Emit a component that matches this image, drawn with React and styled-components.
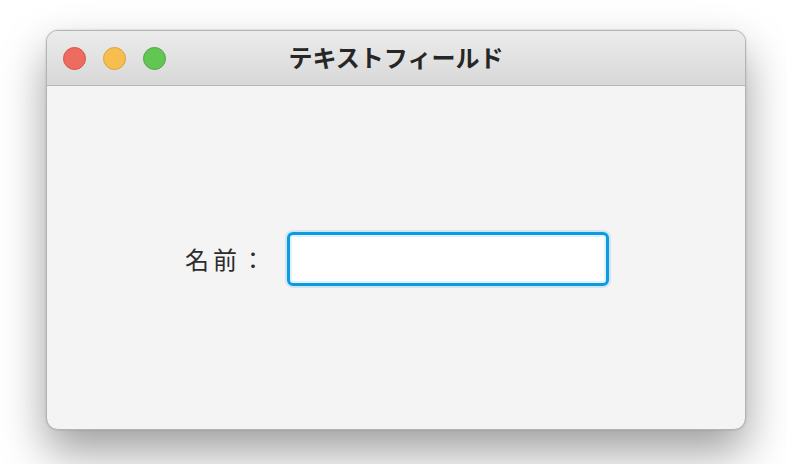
import React from 'react';
import styled, { createGlobalStyle } from 'styled-components';

const GlobalStyle = createGlobalStyle`
  html, body {
    margin: 0;
    background: #ffffff;
    font-family: "Noto Sans CJK JP", "Noto Sans", sans-serif;
  }
`;

const Page = styled.div`
  width: 787px;
  height: 464px;
  box-sizing: border-box;
  padding: 30px 41px 34px 46px;
  overflow: hidden;
`;

const Window = styled.div`
  width: 700px;
  height: 400px;
  box-sizing: border-box;
  display: flex;
  flex-direction: column;
  border-radius: 12px;
  border: 1px solid #b4b4b4;
  background: #f4f4f4;
  overflow: hidden;
  box-shadow: 0 22px 45px rgba(0, 0, 0, 0.38), 0 0 2px rgba(0, 0, 0, 0.2);
`;

const TitleBar = styled.div`
  position: relative;
  height: 55px;
  flex: none;
  display: flex;
  align-items: center;
  justify-content: center;
  background: linear-gradient(#ececec, #d8d8d8);
  border-bottom: 1px solid #b6b6b6;
  box-sizing: border-box;
`;

const Lights = styled.div`
  position: absolute;
  left: 16px;
  top: 16px;
  display: flex;
  gap: 17px;
`;

const Light = styled.span`
  width: 23px;
  height: 23px;
  border-radius: 50%;
  box-sizing: border-box;
  background: ${p => p.$fill};
  border: 1px solid ${p => p.$edge};
`;

const Title = styled.div`
  font-size: 24px;
  font-weight: 700;
  color: #262626;
  margin: 0 0 3px 0;
`;

const Content = styled.div`
  flex: 1;
  display: flex;
  align-items: center;
  justify-content: center;
  gap: 18px;
  padding: 2px 0 0 2px;
`;

const Label = styled.label`
  font-size: 24px;
  color: #2c2c2c;
  letter-spacing: 4px;
  margin-top: -1px;
`;

const Field = styled.input`
  width: 322px;
  height: 54px;
  box-sizing: border-box;
  border: 3px solid #0a9be0;
  border-radius: 6px;
  background: #ffffff;
  outline: none;
  font-size: 20px;
  padding: 0 10px;
  box-shadow: 0 0 0 2px rgba(10, 155, 224, 0.15), inset 0 0 0 2px #e2f1f9;
`;

export default function App() {
  return (
    <>
      <GlobalStyle />
      <Page>
        <Window>
          <TitleBar>
            <Lights>
              <Light $fill="#ee6b60" $edge="#d4544a" />
              <Light $fill="#f6be4f" $edge="#dca23a" />
              <Light $fill="#62c554" $edge="#4ea940" />
            </Lights>
            <Title>テキストフィールド</Title>
          </TitleBar>
          <Content>
            <Label>名前：</Label>
            <Field type="text" />
          </Content>
        </Window>
      </Page>
    </>
  );
}
